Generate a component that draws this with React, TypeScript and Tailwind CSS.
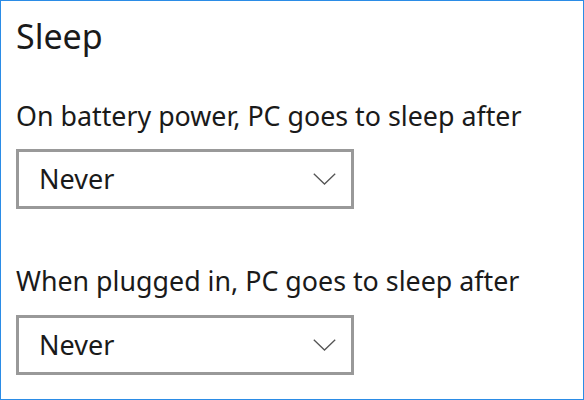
import React from "react";

function Dropdown({ value }: { value: string }) {
  return (
    <div className="flex h-[60px] w-[338px] items-center justify-between border-[3px] border-[#999999] bg-white pl-[20px] pr-[15px]">
      <span className="text-[27px] leading-[32px] text-[#1a1a1a]">{value}</span>
      <svg width="23" height="12" viewBox="0 0 23 12" fill="none">
        <path d="M0.8 0.8 L11.5 11 L22.2 0.8" stroke="#555555" strokeWidth="1.3" />
      </svg>
    </div>
  );
}

export default function App() {
  return (
    <div
      className="h-[400px] w-[584px] border border-[#2b8ce6] bg-white pl-[15px] text-[#1a1a1a]"
      style={{ fontFamily: '"Noto Sans", "Open Sans", sans-serif' }}
    >
      <h1 className="pt-[15px] text-[34px] leading-[40px]">Sleep</h1>
      <p className="mt-[44px] text-[26.8px] leading-[32px]">On battery power, PC goes to sleep after</p>
      <div className="mt-[17px]">
        <Dropdown value="Never" />
      </div>
      <p className="mt-[56px] text-[26.8px] leading-[32px]">When plugged in, PC goes to sleep after</p>
      <div className="mt-[18px]">
        <Dropdown value="Never" />
      </div>
    </div>
  );
}
